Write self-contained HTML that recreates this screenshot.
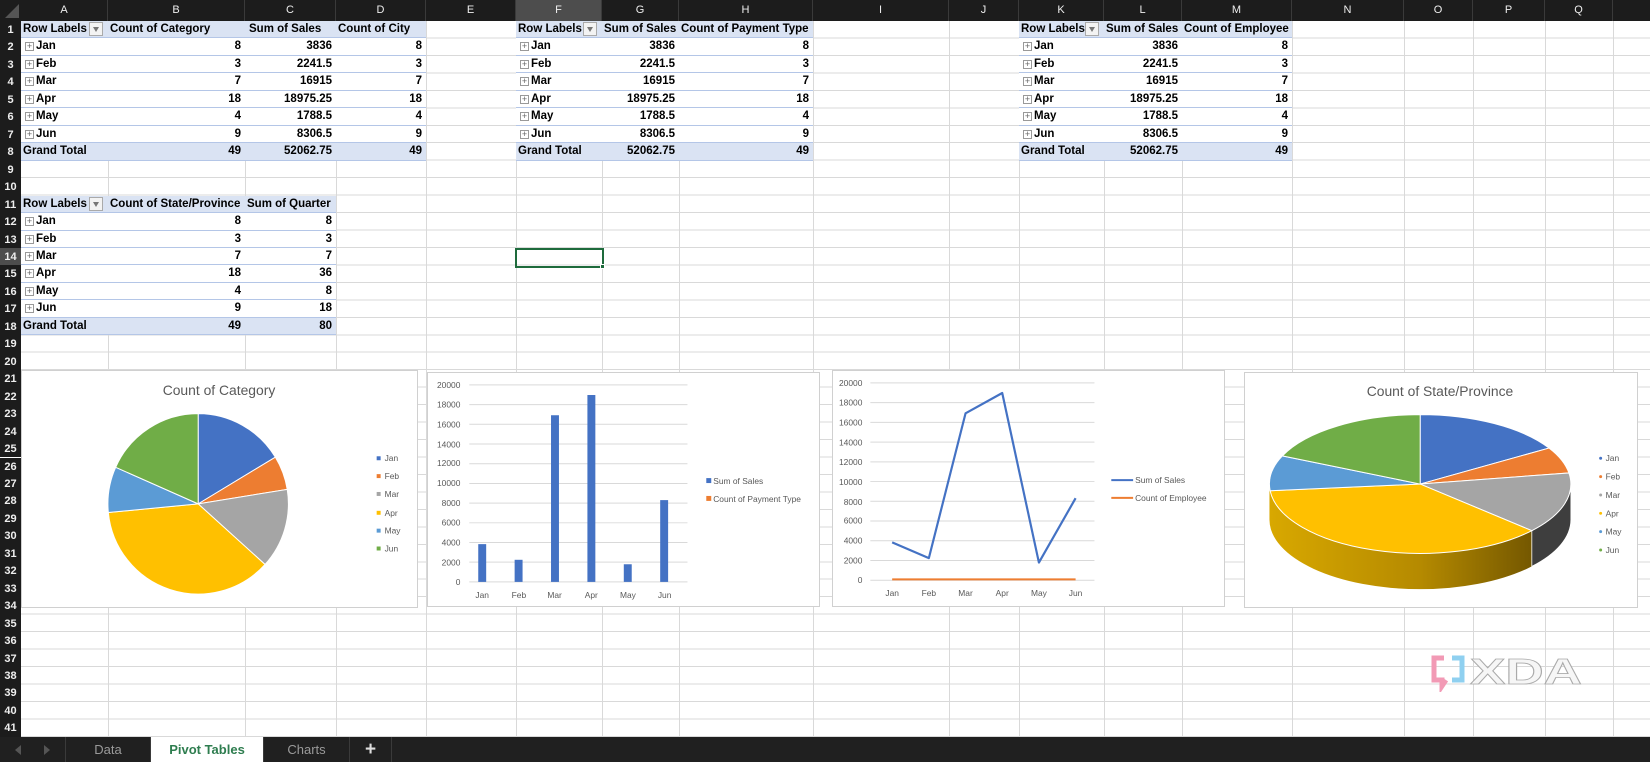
<!DOCTYPE html>
<html><head><meta charset="utf-8"><style>
*{margin:0;padding:0;box-sizing:border-box}
body{width:1650px;height:762px;overflow:hidden;background:#fff;position:relative;font-family:"Liberation Sans",sans-serif}
.hdr{position:absolute;left:0;top:0;width:1650px;height:21px;background:#1c1c1c}
.cl{position:absolute;top:0;height:21px;color:#eee;font-size:11px;line-height:21px;text-align:center;border-right:1px solid #3a3a3a}
.rn{position:absolute;left:0;width:21px;height:17.46px;background:#1c1c1c;color:#eee;font-size:11px;font-weight:bold;text-align:center;line-height:18px}
.grid{position:absolute;left:21px;top:21px;width:1629px;height:716px;background:repeating-linear-gradient(to bottom,transparent 0,transparent 16.46px,#d9d9d9 16.46px,#d9d9d9 17.46px)}
.vl{position:absolute;top:21px;height:716px;width:1px;background:#d9d9d9}
.pv{position:absolute;font-size:11.5px;font-weight:bold;color:#000;background:#fff}
.r{display:flex;height:17.46px;border-bottom:1px solid #b4c6e7;overflow:hidden}
.r>div{flex:none;height:16.46px;line-height:17px;padding:0 4px 0 3px;white-space:nowrap;overflow:hidden;text-align:right;position:relative}
.r.h,.r.t{background:#dae3f3}
.r.h>div{text-align:left;padding-left:2px}
.r>div.l{text-align:left;padding-left:15px}
.r.t>div.l{padding-left:2px}
.pl{position:absolute;left:4px;top:4px;width:9px;height:9px;border:1px solid #999;font-size:9px;line-height:7px;text-align:center;color:#666;font-weight:normal}
.dd{position:absolute;right:5px;top:1px;width:14px;height:14px;border:1px solid #aaa;background:#f3f3f3}
.dd:after{content:"";position:absolute;left:3px;top:4px;border-left:3.5px solid transparent;border-right:3.5px solid transparent;border-top:5px solid #777}
.chart{position:absolute;background:#fff;border:1px solid #d0d0d0}
.tabs{position:absolute;left:0;top:737px;width:1650px;height:25px;background:#202020}
.tab{position:absolute;top:0;height:25px;line-height:25px;text-align:center;font-size:13px;color:#9a9a9a;border-right:1px solid #3a3a3a}
</style></head><body>
<div class="grid"></div>
<div class="vl" style="left:108px"></div><div class="vl" style="left:245px"></div><div class="vl" style="left:336px"></div><div class="vl" style="left:426px"></div><div class="vl" style="left:516px"></div><div class="vl" style="left:602px"></div><div class="vl" style="left:679px"></div><div class="vl" style="left:813px"></div><div class="vl" style="left:949px"></div><div class="vl" style="left:1019px"></div><div class="vl" style="left:1104px"></div><div class="vl" style="left:1182px"></div><div class="vl" style="left:1292px"></div><div class="vl" style="left:1404px"></div><div class="vl" style="left:1473px"></div><div class="vl" style="left:1545px"></div><div class="vl" style="left:1613px"></div>

<div class="hdr">
<svg style="position:absolute;left:4px;top:4px" width="15" height="14"><polygon points="15,0 15,14 1,14" fill="#555"/></svg>
<div class="cl" style="left:21px;width:87px">A</div><div class="cl" style="left:108px;width:137px">B</div><div class="cl" style="left:245px;width:91px">C</div><div class="cl" style="left:336px;width:90px">D</div><div class="cl" style="left:426px;width:90px">E</div><div class="cl" style="left:516px;width:86px;background:#4d4d4d">F</div><div class="cl" style="left:602px;width:77px">G</div><div class="cl" style="left:679px;width:134px">H</div><div class="cl" style="left:813px;width:136px">I</div><div class="cl" style="left:949px;width:70px">J</div><div class="cl" style="left:1019px;width:85px">K</div><div class="cl" style="left:1104px;width:78px">L</div><div class="cl" style="left:1182px;width:110px">M</div><div class="cl" style="left:1292px;width:112px">N</div><div class="cl" style="left:1404px;width:69px">O</div><div class="cl" style="left:1473px;width:72px">P</div><div class="cl" style="left:1545px;width:68px">Q</div>
</div>

<div class="rn" style="top:21px">1</div><div class="rn" style="top:38.46px">2</div><div class="rn" style="top:55.92px">3</div><div class="rn" style="top:73.38px">4</div><div class="rn" style="top:90.84px">5</div><div class="rn" style="top:108.3px">6</div><div class="rn" style="top:125.76px">7</div><div class="rn" style="top:143.22px">8</div><div class="rn" style="top:160.68px">9</div><div class="rn" style="top:178.14px">10</div><div class="rn" style="top:195.6px">11</div><div class="rn" style="top:213.06px">12</div><div class="rn" style="top:230.52px">13</div><div class="rn" style="top:247.98px;background:#4d4d4d">14</div><div class="rn" style="top:265.44px">15</div><div class="rn" style="top:282.9px">16</div><div class="rn" style="top:300.36px">17</div><div class="rn" style="top:317.82px">18</div><div class="rn" style="top:335.28px">19</div><div class="rn" style="top:352.74px">20</div><div class="rn" style="top:370.2px">21</div><div class="rn" style="top:387.66px">22</div><div class="rn" style="top:405.12px">23</div><div class="rn" style="top:422.58px">24</div><div class="rn" style="top:440.04px">25</div><div class="rn" style="top:457.5px">26</div><div class="rn" style="top:474.96px">27</div><div class="rn" style="top:492.42px">28</div><div class="rn" style="top:509.88px">29</div><div class="rn" style="top:527.34px">30</div><div class="rn" style="top:544.8px">31</div><div class="rn" style="top:562.26px">32</div><div class="rn" style="top:579.72px">33</div><div class="rn" style="top:597.18px">34</div><div class="rn" style="top:614.64px">35</div><div class="rn" style="top:632.1px">36</div><div class="rn" style="top:649.56px">37</div><div class="rn" style="top:667.02px">38</div><div class="rn" style="top:684.48px">39</div><div class="rn" style="top:701.94px">40</div><div class="rn" style="top:719.4px">41</div>

<div class="pv" style="left:21px;top:21px;width:405px">
<div class="r h"><div style="width:87px">Row Labels<span class="dd"></span></div><div style="width:137px">Count of Category</div><div style="width:91px;padding-left:4px">Sum of Sales</div><div style="width:90px">Count of City</div></div>
<div class="r"><div class="l" style="width:87px"><span class="pl">+</span>Jan</div><div style="width:137px">8</div><div style="width:91px">3836</div><div style="width:90px">8</div></div>
<div class="r"><div class="l" style="width:87px"><span class="pl">+</span>Feb</div><div style="width:137px">3</div><div style="width:91px">2241.5</div><div style="width:90px">3</div></div>
<div class="r"><div class="l" style="width:87px"><span class="pl">+</span>Mar</div><div style="width:137px">7</div><div style="width:91px">16915</div><div style="width:90px">7</div></div>
<div class="r"><div class="l" style="width:87px"><span class="pl">+</span>Apr</div><div style="width:137px">18</div><div style="width:91px">18975.25</div><div style="width:90px">18</div></div>
<div class="r"><div class="l" style="width:87px"><span class="pl">+</span>May</div><div style="width:137px">4</div><div style="width:91px">1788.5</div><div style="width:90px">4</div></div>
<div class="r"><div class="l" style="width:87px"><span class="pl">+</span>Jun</div><div style="width:137px">9</div><div style="width:91px">8306.5</div><div style="width:90px">9</div></div>
<div class="r t"><div class="l" style="width:87px">Grand Total</div><div style="width:137px">49</div><div style="width:91px">52062.75</div><div style="width:90px">49</div></div>
</div>

<div class="pv" style="left:516px;top:21px;width:297px">
<div class="r h"><div style="width:86px">Row Labels<span class="dd"></span></div><div style="width:77px">Sum of Sales</div><div style="width:134px">Count of Payment Type</div></div>
<div class="r"><div class="l" style="width:86px"><span class="pl">+</span>Jan</div><div style="width:77px">3836</div><div style="width:134px">8</div></div>
<div class="r"><div class="l" style="width:86px"><span class="pl">+</span>Feb</div><div style="width:77px">2241.5</div><div style="width:134px">3</div></div>
<div class="r"><div class="l" style="width:86px"><span class="pl">+</span>Mar</div><div style="width:77px">16915</div><div style="width:134px">7</div></div>
<div class="r"><div class="l" style="width:86px"><span class="pl">+</span>Apr</div><div style="width:77px">18975.25</div><div style="width:134px">18</div></div>
<div class="r"><div class="l" style="width:86px"><span class="pl">+</span>May</div><div style="width:77px">1788.5</div><div style="width:134px">4</div></div>
<div class="r"><div class="l" style="width:86px"><span class="pl">+</span>Jun</div><div style="width:77px">8306.5</div><div style="width:134px">9</div></div>
<div class="r t"><div class="l" style="width:86px">Grand Total</div><div style="width:77px">52062.75</div><div style="width:134px">49</div></div>
</div>

<div class="pv" style="left:1019px;top:21px;width:273px">
<div class="r h"><div style="width:85px">Row Labels<span class="dd"></span></div><div style="width:78px">Sum of Sales</div><div style="width:110px">Count of Employee</div></div>
<div class="r"><div class="l" style="width:85px"><span class="pl">+</span>Jan</div><div style="width:78px">3836</div><div style="width:110px">8</div></div>
<div class="r"><div class="l" style="width:85px"><span class="pl">+</span>Feb</div><div style="width:78px">2241.5</div><div style="width:110px">3</div></div>
<div class="r"><div class="l" style="width:85px"><span class="pl">+</span>Mar</div><div style="width:78px">16915</div><div style="width:110px">7</div></div>
<div class="r"><div class="l" style="width:85px"><span class="pl">+</span>Apr</div><div style="width:78px">18975.25</div><div style="width:110px">18</div></div>
<div class="r"><div class="l" style="width:85px"><span class="pl">+</span>May</div><div style="width:78px">1788.5</div><div style="width:110px">4</div></div>
<div class="r"><div class="l" style="width:85px"><span class="pl">+</span>Jun</div><div style="width:78px">8306.5</div><div style="width:110px">9</div></div>
<div class="r t"><div class="l" style="width:85px">Grand Total</div><div style="width:78px">52062.75</div><div style="width:110px">49</div></div>
</div>

<div class="pv" style="left:21px;top:195.6px;width:315px">
<div class="r h"><div style="width:87px">Row Labels<span class="dd"></span></div><div style="width:137px">Count of State/Province</div><div style="width:91px">Sum of Quarter</div></div>
<div class="r"><div class="l" style="width:87px"><span class="pl">+</span>Jan</div><div style="width:137px">8</div><div style="width:91px">8</div></div>
<div class="r"><div class="l" style="width:87px"><span class="pl">+</span>Feb</div><div style="width:137px">3</div><div style="width:91px">3</div></div>
<div class="r"><div class="l" style="width:87px"><span class="pl">+</span>Mar</div><div style="width:137px">7</div><div style="width:91px">7</div></div>
<div class="r"><div class="l" style="width:87px"><span class="pl">+</span>Apr</div><div style="width:137px">18</div><div style="width:91px">36</div></div>
<div class="r"><div class="l" style="width:87px"><span class="pl">+</span>May</div><div style="width:137px">4</div><div style="width:91px">8</div></div>
<div class="r"><div class="l" style="width:87px"><span class="pl">+</span>Jun</div><div style="width:137px">9</div><div style="width:91px">18</div></div>
<div class="r t"><div class="l" style="width:87px">Grand Total</div><div style="width:137px">49</div><div style="width:91px">80</div></div>
</div>

<div style="position:absolute;left:515px;top:247.5px;width:89px;height:20px;border:2px solid #1e6b3c"></div>
<div style="position:absolute;left:600px;top:264px;width:5px;height:5px;background:#1e6b3c;border:1px solid #fff"></div>

<svg class="chart" style="left:21px;top:370px" width="397" height="238" viewBox="21 370 397 238">
<rect x="21" y="370" width="397" height="238" fill="#fff"/>
<text x="219" y="394" font-size="14" fill="#595959" text-anchor="middle" font-family="Liberation Sans">Count of Category</text>
<g stroke="#fff" stroke-width="1">
<path d="M198,504 L198,413 A91,91 0 0 1 275.8,456.9Z" fill="#4472c4"/>
<path d="M198,504 L275.8,456.9 A91,91 0 0 1 287.8,489.4Z" fill="#ed7d31"/>
<path d="M198,504 L287.8,489.4 A91,91 0 0 1 265.4,565.1Z" fill="#a5a5a5"/>
<path d="M198,504 L265.4,565.1 A91,91 0 0 1 107.4,512.7Z" fill="#ffc000"/>
<path d="M198,504 L107.4,512.7 A91,91 0 0 1 114.8,467.1Z" fill="#5b9bd5"/>
<path d="M198,504 L114.8,467.1 A91,91 0 0 1 198,413Z" fill="#70ad47"/>
</g>
<g font-size="8.5" fill="#595959" font-family="Liberation Sans">
<rect x="378" y="456" width="4" height="4" fill="#4472c4"/><text x="386" y="461">Jan</text>
<rect x="378" y="474" width="4" height="4" fill="#ed7d31"/><text x="386" y="479">Feb</text>
<rect x="378" y="492" width="4" height="4" fill="#a5a5a5"/><text x="386" y="497">Mar</text>
<rect x="378" y="511" width="4" height="4" fill="#ffc000"/><text x="386" y="516">Apr</text>
<rect x="378" y="529" width="4" height="4" fill="#5b9bd5"/><text x="386" y="534">May</text>
<rect x="378" y="547" width="4" height="4" fill="#70ad47"/><text x="386" y="552">Jun</text>
</g>
</svg>

<svg class="chart" style="left:427px;top:372px" width="393" height="235" viewBox="427 372 393 235">
<rect x="427" y="372" width="393" height="235" fill="#fff"/>
<g stroke="#d9d9d9" stroke-width="1">
<line x1="468" x2="688" y1="384" y2="384"/><line x1="468" x2="688" y1="403.9" y2="403.9"/><line x1="468" x2="688" y1="423.7" y2="423.7"/><line x1="468" x2="688" y1="443.6" y2="443.6"/><line x1="468" x2="688" y1="463.5" y2="463.5"/><line x1="468" x2="688" y1="483.4" y2="483.4"/><line x1="468" x2="688" y1="503.2" y2="503.2"/><line x1="468" x2="688" y1="523.1" y2="523.1"/><line x1="468" x2="688" y1="543" y2="543"/><line x1="468" x2="688" y1="562.8" y2="562.8"/><line x1="468" x2="688" y1="582.7" y2="582.7"/>
</g>
<g font-size="8.5" fill="#595959" text-anchor="end" font-family="Liberation Sans">
<text x="459" y="387">20000</text><text x="459" y="407">18000</text><text x="459" y="427">16000</text><text x="459" y="447">14000</text><text x="459" y="466">12000</text><text x="459" y="486">10000</text><text x="459" y="506">8000</text><text x="459" y="526">6000</text><text x="459" y="546">4000</text><text x="459" y="566">2000</text><text x="459" y="586">0</text>
</g>
<g fill="#4472c4">
<rect x="477" y="544.6" width="8" height="38.1"/><rect x="513.7" y="560.4" width="8" height="22.3"/><rect x="550.4" y="414.6" width="8" height="168.1"/><rect x="587.1" y="394.2" width="8" height="188.5"/><rect x="623.8" y="564.9" width="8" height="17.8"/><rect x="660.5" y="500.2" width="8" height="82.5"/>
</g>
<g font-size="8.5" fill="#595959" text-anchor="middle" font-family="Liberation Sans">
<text x="481" y="599">Jan</text><text x="518" y="599">Feb</text><text x="554" y="599">Mar</text><text x="591" y="599">Apr</text><text x="628" y="599">May</text><text x="665" y="599">Jun</text>
</g>
<g font-size="8.5" fill="#595959" font-family="Liberation Sans">
<rect x="707" y="478" width="5" height="5" fill="#4472c4"/><text x="714" y="484">Sum of Sales</text>
<rect x="707" y="496" width="5" height="5" fill="#ed7d31"/><text x="714" y="502">Count of Payment Type</text>
</g>
</svg>

<svg class="chart" style="left:832px;top:370px" width="393" height="237" viewBox="832 370 393 237">
<rect x="832" y="370" width="393" height="237" fill="#fff"/>
<g stroke="#d9d9d9" stroke-width="1">
<line x1="869" x2="1095" y1="382" y2="382"/><line x1="869" x2="1095" y1="401.9" y2="401.9"/><line x1="869" x2="1095" y1="421.8" y2="421.8"/><line x1="869" x2="1095" y1="441.7" y2="441.7"/><line x1="869" x2="1095" y1="461.6" y2="461.6"/><line x1="869" x2="1095" y1="481.5" y2="481.5"/><line x1="869" x2="1095" y1="501.4" y2="501.4"/><line x1="869" x2="1095" y1="521.3" y2="521.3"/><line x1="869" x2="1095" y1="541.2" y2="541.2"/><line x1="869" x2="1095" y1="561.1" y2="561.1"/><line x1="869" x2="1095" y1="581" y2="581"/>
</g>
<g font-size="8.5" fill="#595959" text-anchor="end" font-family="Liberation Sans">
<text x="861" y="385">20000</text><text x="861" y="405">18000</text><text x="861" y="425">16000</text><text x="861" y="445">14000</text><text x="861" y="465">12000</text><text x="861" y="485">10000</text><text x="861" y="505">8000</text><text x="861" y="524">6000</text><text x="861" y="544">4000</text><text x="861" y="564">2000</text><text x="861" y="584">0</text>
</g>
<polyline points="891,542.8 928,558.7 965,412.7 1002,392.2 1039,563.2 1076,498.3" fill="none" stroke="#4472c4" stroke-width="2.2" stroke-linejoin="round"/>
<line x1="891" x2="1076" y1="580.2" y2="580.2" stroke="#ed7d31" stroke-width="2"/>
<g font-size="8.5" fill="#595959" text-anchor="middle" font-family="Liberation Sans">
<text x="891" y="597">Jan</text><text x="928" y="597">Feb</text><text x="965" y="597">Mar</text><text x="1002" y="597">Apr</text><text x="1039" y="597">May</text><text x="1076" y="597">Jun</text>
</g>
<g font-size="8.5" fill="#595959" font-family="Liberation Sans">
<line x1="1112" x2="1134" y1="480" y2="480" stroke="#4472c4" stroke-width="2"/><text x="1136" y="483">Sum of Sales</text>
<line x1="1112" x2="1134" y1="498" y2="498" stroke="#ed7d31" stroke-width="2"/><text x="1136" y="501">Count of Employee</text>
</g>
</svg>

<svg class="chart" style="left:1244px;top:372px" width="394" height="236" viewBox="1244 372 394 236">
<defs><linearGradient id="gd" x1="0" x2="1" y1="0" y2="0"><stop offset="0" stop-color="#d8a800"/><stop offset="0.5" stop-color="#b58a00"/><stop offset="1" stop-color="#5e4600"/></linearGradient></defs>
<rect x="1244" y="372" width="394" height="236" fill="#fff"/>
<text x="1440" y="395" font-size="14" fill="#595959" text-anchor="middle" font-family="Liberation Sans">Count of State/Province</text>
<path d="M1268,484 A152,70 0 0 0 1572,484 L1572,520 A152,70 0 0 1 1268,520Z" fill="url(#gd)"/>
<path d="M1532.6,531 A152,70 0 0 0 1572,484 L1572,520 A152,70 0 0 1 1532.6,567Z" fill="#3e3e3e" stroke="#fff" stroke-width="0.8"/>
<g stroke="#fff" stroke-width="1">
<path d="M1420,484 L1420,414 A152,70 0 0 1 1550,447.7Z" fill="#4472c4"/>
<path d="M1420,484 L1550,447.7 A152,70 0 0 1 1570,472.8Z" fill="#ed7d31"/>
<path d="M1420,484 L1570,472.8 A152,70 0 0 1 1532.6,531Z" fill="#a5a5a5"/>
<path d="M1420,484 L1532.6,531 A152,70 0 0 1 1268.7,490.7Z" fill="#ffc000"/>
<path d="M1420,484 L1268.7,490.7 A152,70 0 0 1 1281,455.6Z" fill="#5b9bd5"/>
<path d="M1420,484 L1281,455.6 A152,70 0 0 1 1420,414Z" fill="#70ad47"/>
</g>
<g font-size="8.5" fill="#595959" font-family="Liberation Sans">
<circle cx="1602" cy="458" r="1.5" fill="#4472c4"/><text x="1607" y="461">Jan</text>
<circle cx="1602" cy="476.5" r="1.5" fill="#ed7d31"/><text x="1607" y="479.5">Feb</text>
<circle cx="1602" cy="495" r="1.5" fill="#a5a5a5"/><text x="1607" y="498">Mar</text>
<circle cx="1602" cy="513.5" r="1.5" fill="#ffc000"/><text x="1607" y="516.5">Apr</text>
<circle cx="1602" cy="532" r="1.5" fill="#5b9bd5"/><text x="1607" y="535">May</text>
<circle cx="1602" cy="550.5" r="1.5" fill="#70ad47"/><text x="1607" y="553.5">Jun</text>
</g>
</svg>

<svg style="position:absolute;left:1430px;top:650px" width="160" height="42">
<path d="M14,8 H4 V30 H12 V36 L16,30" fill="none" stroke="#f29ab5" stroke-width="5"/>
<path d="M22,8 H32 V30 H22" fill="none" stroke="#8fd0f0" stroke-width="5"/>
<text x="40" y="34" font-size="36" font-weight="bold" font-family="Liberation Sans" fill="#f6f6f6" stroke="#aaa" stroke-width="0.8" textLength="112" lengthAdjust="spacingAndGlyphs">XDA</text>
</svg>

<div class="tabs">
<svg style="position:absolute;left:14px;top:7px" width="40" height="12"><polygon points="7,1 7,11 1,6" fill="#555"/><polygon points="30,1 30,11 36,6" fill="#555"/></svg>
<div class="tab" style="left:65px;width:86px;border-left:1px solid #3a3a3a">Data</div>
<div class="tab" style="left:151px;width:113px;background:#fff;color:#2e7d4f;font-weight:bold">Pivot Tables</div>
<div class="tab" style="left:264px;width:86px">Charts</div>
<div class="tab" style="left:350px;width:42px;color:#ddd;font-size:19px;font-weight:bold">+</div>
</div>
</body></html>
